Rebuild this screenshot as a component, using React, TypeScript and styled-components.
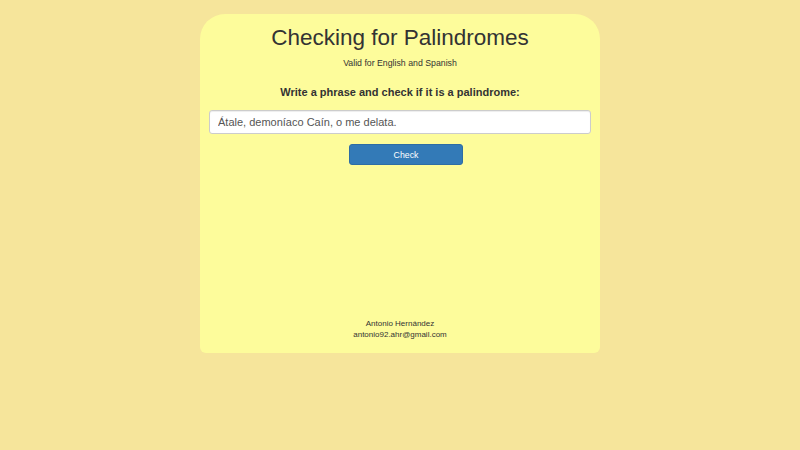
import React, { useState } from 'react'
import styled, { createGlobalStyle } from 'styled-components'

const GlobalStyle = createGlobalStyle`
  html, body {
    margin: 0;
    padding: 0;
    background: #f6e59b;
  }
  body {
    font-family: 'Liberation Sans', Arial, Helvetica, sans-serif;
    color: #333;
  }
`

const Page = styled.div`
  display: flex;
  justify-content: center;
  padding-top: 14px;
  min-height: 450px;
  box-sizing: border-box;
`

const Card = styled.main`
  width: 400px;
  height: 339px;
  box-sizing: border-box;
  padding: 0 9px 13px;
  background: #fdfc9b;
  border-radius: 25px 25px 6px 6px;
  display: flex;
  flex-direction: column;
  align-items: center;
`

const Title = styled.h1`
  margin: 8px 0 0;
  font-size: 22.5px;
  font-weight: 400;
  line-height: 32px;
  color: #333;
`

const Subtitle = styled.p`
  margin: 3px 0 0;
  font-size: 8.75px;
  line-height: 13px;
`

const Prompt = styled.h4`
  margin: 15px 0 0;
  font-size: 11px;
  font-weight: 700;
  line-height: 15px;
`

const PhraseInput = styled.input`
  align-self: stretch;
  margin-top: 10px;
  height: 24px;
  box-sizing: border-box;
  padding: 0 8px;
  border: 1px solid #ccc;
  border-radius: 3px;
  background: #fff;
  font-family: inherit;
  font-size: 11px;
  color: #555;
  box-shadow: inset 0 1px 1px rgba(0, 0, 0, 0.075);
  outline: none;
`

const CheckButton = styled.button`
  margin: 10px 0 0 12px;
  width: 114px;
  height: 21px;
  padding: 0;
  border: 1px solid #2e6da4;
  border-radius: 3px;
  background: #337ab7;
  color: #fff;
  font-family: inherit;
  font-size: 8.75px;
  cursor: pointer;
`

const Footer = styled.footer`
  margin-top: auto;
  text-align: center;
  font-size: 8px;
  line-height: 11px;
`

export default function App() {
  const [phrase, setPhrase] = useState('Átale, demoníaco Caín, o me delata.')

  return (
    <>
      <GlobalStyle />
      <Page>
        <Card>
          <Title>Checking for Palindromes</Title>
          <Subtitle>Valid for English and Spanish</Subtitle>
          <Prompt>Write a phrase and check if it is a palindrome:</Prompt>
          <PhraseInput value={phrase} onChange={e => setPhrase(e.target.value)} />
          <CheckButton type="button">Check</CheckButton>
          <Footer>
            <div>Antonio Hernández</div>
            <div>antonio92.ahr@gmail.com</div>
          </Footer>
        </Card>
      </Page>
    </>
  )
}
